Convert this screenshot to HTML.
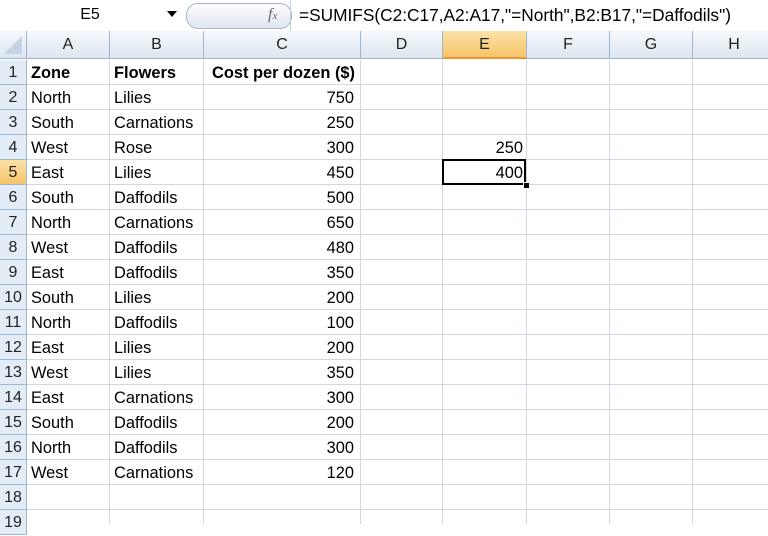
<!DOCTYPE html>
<html><head><style>
body{margin:0;width:768px;height:524px;overflow:hidden;background:#fff;font-family:"Liberation Sans",sans-serif;position:relative}
.a{position:absolute;white-space:nowrap}
.fb{left:0;top:0;width:768px;height:31px;background:#fff;border-bottom:1px solid #9eb6ce}
.hdr{top:31px;height:28px;background:linear-gradient(#f5f8fc,#dde6f1);border-right:1px solid #9eb6ce;border-bottom:1px solid #9eb6ce;box-sizing:border-box;text-align:center;line-height:28px;font-size:16px;color:#222}
.rh{left:0;width:27px;height:25px;background:#e4ecf7;border-right:1px solid #9eb6ce;border-bottom:1px solid #9eb6ce;box-sizing:border-box;text-align:center;line-height:26px;font-size:16px;color:#222}
.vl{top:60px;width:1px;height:464px;background:#d0d7e5}
.hl{left:27px;width:741px;height:1px;background:#d0d7e5}
.c{font-size:16.4px;line-height:25px;color:#000;margin-top:1px}
</style></head><body>
<div class="a fb"></div>
<div class="a" style="left:0;top:4px;width:180px;height:22px;text-align:center;font-size:16px;line-height:22px">E5</div>
<div class="a" style="left:167px;top:11px;width:0;height:0;border-left:5px solid transparent;border-right:5px solid transparent;border-top:6px solid #000"></div>
<div class="a" style="left:186px;top:3px;width:104px;height:24px;border:1px solid #a5b6cc;border-radius:12px;background:linear-gradient(#fdfdfe,#dfe7f1)"></div>
<div class="a" style="left:268px;top:6px;font-family:'Liberation Serif',serif;font-style:italic;font-size:16px;color:#666">f<span style="font-size:11px">x</span></div>
<div class="a" style="left:290px;top:0;width:1px;height:31px;background:#c5d2e0"></div>
<div class="a" style="left:299px;top:4px;font-size:17.3px;line-height:22px">=SUMIFS(C2:C17,A2:A17,"=North",B2:B17,"=Daffodils")</div>

<div class="a hdr" style="left:0;width:27px"></div>
<div class="a" style="left:4px;top:36px;width:0;height:0;border-left:18px solid transparent;border-bottom:18px solid #c5d3e4"></div>
<div class="a hdr" style="left:27px;width:83px">A</div>
<div class="a hdr" style="left:110px;width:94px">B</div>
<div class="a hdr" style="left:204px;width:157px">C</div>
<div class="a hdr" style="left:361px;width:82px">D</div>
<div class="a hdr" style="left:443px;width:84px;background:linear-gradient(#fbe2a6,#f6c46a);border-bottom:2px solid #f29536">E</div>
<div class="a hdr" style="left:527px;width:83px">F</div>
<div class="a hdr" style="left:610px;width:83px">G</div>
<div class="a hdr" style="left:693px;width:83px">H</div>

<div class="a vl" style="left:109px"></div><div class="a vl" style="left:203px"></div><div class="a vl" style="left:360px"></div><div class="a vl" style="left:442px"></div><div class="a vl" style="left:526px"></div><div class="a vl" style="left:609px"></div><div class="a vl" style="left:692px"></div>

<div class="a rh" style="top:60px">1</div><div class="a hl" style="top:84px"></div>
<div class="a rh" style="top:85px">2</div><div class="a hl" style="top:109px"></div>
<div class="a rh" style="top:110px">3</div><div class="a hl" style="top:134px"></div>
<div class="a rh" style="top:135px">4</div><div class="a hl" style="top:159px"></div>
<div class="a rh" style="top:160px;background:linear-gradient(#fbe2a6,#f6c46a)">5</div><div class="a hl" style="top:184px"></div>
<div class="a rh" style="top:185px">6</div><div class="a hl" style="top:209px"></div>
<div class="a rh" style="top:210px">7</div><div class="a hl" style="top:234px"></div>
<div class="a rh" style="top:235px">8</div><div class="a hl" style="top:259px"></div>
<div class="a rh" style="top:260px">9</div><div class="a hl" style="top:284px"></div>
<div class="a rh" style="top:285px">10</div><div class="a hl" style="top:309px"></div>
<div class="a rh" style="top:310px">11</div><div class="a hl" style="top:334px"></div>
<div class="a rh" style="top:335px">12</div><div class="a hl" style="top:359px"></div>
<div class="a rh" style="top:360px">13</div><div class="a hl" style="top:384px"></div>
<div class="a rh" style="top:385px">14</div><div class="a hl" style="top:409px"></div>
<div class="a rh" style="top:410px">15</div><div class="a hl" style="top:434px"></div>
<div class="a rh" style="top:435px">16</div><div class="a hl" style="top:459px"></div>
<div class="a rh" style="top:460px">17</div><div class="a hl" style="top:484px"></div>
<div class="a rh" style="top:485px">18</div><div class="a hl" style="top:509px"></div>
<div class="a rh" style="top:510px">19</div>

<div class="a c" style="left:31px;top:60px;font-weight:bold">Zone</div>
<div class="a c" style="left:114px;top:60px;font-weight:bold">Flowers</div>
<div class="a c" style="left:212px;top:60px;font-weight:bold">Cost per dozen ($)</div>

<div class="a c" style="left:31px;top:85px">North<br>South<br>West<br>East<br>South<br>North<br>West<br>East<br>South<br>North<br>East<br>West<br>East<br>South<br>North<br>West</div>
<div class="a c" style="left:114px;top:85px">Lilies<br>Carnations<br>Rose<br>Lilies<br>Daffodils<br>Carnations<br>Daffodils<br>Daffodils<br>Lilies<br>Daffodils<br>Lilies<br>Lilies<br>Carnations<br>Daffodils<br>Daffodils<br>Carnations</div>
<div class="a c" style="left:300px;width:54px;text-align:right;top:85px">750<br>250<br>300<br>450<br>500<br>650<br>480<br>350<br>200<br>100<br>200<br>350<br>300<br>200<br>300<br>120</div>

<div class="a c" style="left:470px;width:53px;text-align:right;top:135px">250</div>
<div class="a" style="left:442px;top:159px;width:84px;height:26px;border:2px solid #000;box-sizing:border-box"></div>
<div class="a c" style="left:470px;width:53px;text-align:right;top:160px">400</div>
<div class="a" style="left:523px;top:182px;width:5px;height:5px;background:#000;border:1px solid #fff"></div>
</body></html>
